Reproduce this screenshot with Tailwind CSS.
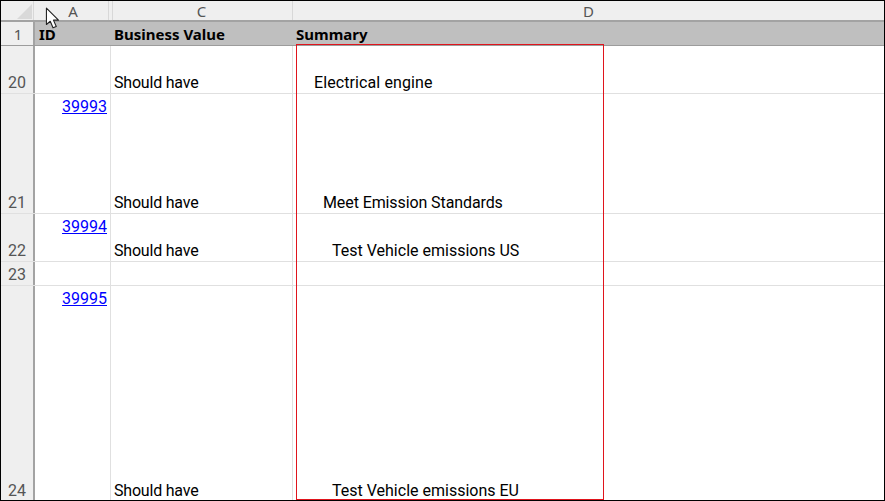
<!DOCTYPE html>
<html lang="en">
  <head>
    <meta charset="UTF-8" />
    <title>Sheet</title>
    <script src="https://cdn.jsdelivr.net/npm/@tailwindcss/browser@4"></script>
  </head>
  <body class="bg-white">
    <div class="relative w-[885px] h-[501px] overflow-hidden border border-black font-['Roboto',sans-serif] text-[16px] leading-[20px] text-black">
      <!-- column letters -->
      <div class="flex h-[21px] bg-[#efefef] border-b-2 border-[#a3a3a3] text-[#555] text-[15px] font-['Noto_Sans',sans-serif]">
        <div class="w-[33px] relative border-r border-[#d8d8d8]">
          <div class="absolute right-[1px] bottom-[1px] w-0 h-0 border-l-[15px] border-l-transparent border-b-[15px] border-b-[#d9d9d9]"></div>
        </div>
        <div class="w-[75px] flex justify-center items-center border-r border-[#d8d8d8] pl-[4px]">A</div>
        <div class="w-[4px] border-r border-[#d8d8d8]"></div>
        <div class="w-[180px] flex justify-center items-center border-r border-[#d8d8d8] pr-[2px]">C</div>
        <div class="w-[591px] flex justify-center items-center">D</div>
      </div>

      <!-- header row -->
      <div class="flex h-[24px] bg-[#bfbfbf] border-b border-[#9c9c9c] font-bold font-['Noto_Sans',sans-serif] text-[15px]">
        <div class="w-[34px] pl-[2px] flex items-center justify-center bg-[#efefef] border-r-2 border-[#a3a3a3] font-normal text-[#555]">1</div>
        <div class="w-[76px] pl-[4px] pb-[1px] flex items-end">ID</div>
        <div class="w-[182px] pl-[3px] pb-[1px] flex items-end">Business Value</div>
        <div class="flex-1 pl-[3px] pb-[1px] flex items-end">Summary</div>
      </div>

      <div class="flex h-[48px] border-b border-[#e0e0e0]">
        <div class="w-[34px] flex items-end justify-center bg-[#efefef] border-r-2 border-[#a3a3a3] text-[#555]">20</div>
        <div class="w-[76px] border-r border-[#e0e0e0]"></div>
        <div class="w-[182px] pl-[3px] flex items-end border-r border-[#e0e0e0] tracking-[-0.2px]">Should have</div>
        <div class="flex-1 pl-[21px] flex items-end tracking-[0.1px]">Electrical engine</div>
      </div>

      <div class="flex h-[120px] border-b border-[#e0e0e0]">
        <div class="w-[34px] flex items-end justify-center bg-[#efefef] border-r-2 border-[#a3a3a3] text-[#555]">21</div>
        <div class="w-[76px] pr-[3px] pt-[3px] text-right border-r border-[#e0e0e0]"><a href="#" class="text-[#0000ff] underline">39993</a></div>
        <div class="w-[182px] pl-[3px] flex items-end border-r border-[#e0e0e0] tracking-[-0.2px]">Should have</div>
        <div class="flex-1 pl-[30px] flex items-end tracking-[-0.1px]">Meet Emission Standards</div>
      </div>

      <div class="flex h-[48px] border-b border-[#e0e0e0]">
        <div class="w-[34px] flex items-end justify-center bg-[#efefef] border-r-2 border-[#a3a3a3] text-[#555]">22</div>
        <div class="w-[76px] pr-[3px] pt-[3px] text-right border-r border-[#e0e0e0]"><a href="#" class="text-[#0000ff] underline">39994</a></div>
        <div class="w-[182px] pl-[3px] flex items-end border-r border-[#e0e0e0] tracking-[-0.2px]">Should have</div>
        <div class="flex-1 pl-[39px] flex items-end">Test Vehicle emissions US</div>
      </div>

      <div class="flex h-[24px] border-b border-[#e0e0e0]">
        <div class="w-[34px] flex items-end justify-center bg-[#efefef] border-r-2 border-[#a3a3a3] text-[#555]">23</div>
        <div class="w-[76px] border-r border-[#e0e0e0]"></div>
        <div class="w-[182px] border-r border-[#e0e0e0]"></div>
        <div class="flex-1"></div>
      </div>

      <div class="flex h-[215px]">
        <div class="w-[34px] flex items-end justify-center bg-[#efefef] border-r-2 border-[#a3a3a3] text-[#555]">24</div>
        <div class="w-[76px] pr-[3px] pt-[3px] text-right border-r border-[#e0e0e0]"><a href="#" class="text-[#0000ff] underline">39995</a></div>
        <div class="w-[182px] pl-[3px] flex items-end border-r border-[#e0e0e0] tracking-[-0.2px]">Should have</div>
        <div class="flex-1 pl-[39px] flex items-end">Test Vehicle emissions EU</div>
      </div>

      <!-- red highlight box -->
      <div class="absolute left-[295px] top-[43px] w-[308px] h-[456px] border border-[#e0141c]"></div>

      <!-- mouse cursor -->
      <svg class="absolute left-[43px] top-[6px]" width="18" height="23" viewBox="0 0 16 21">
        <path d="M2 1 L2 16 L5.5 13 L8 19 L11 17.8 L8.4 12 L13 12 Z" fill="#fff" stroke="#222" stroke-width="1" stroke-linejoin="round" />
      </svg>
    </div>
  </body>
</html>
